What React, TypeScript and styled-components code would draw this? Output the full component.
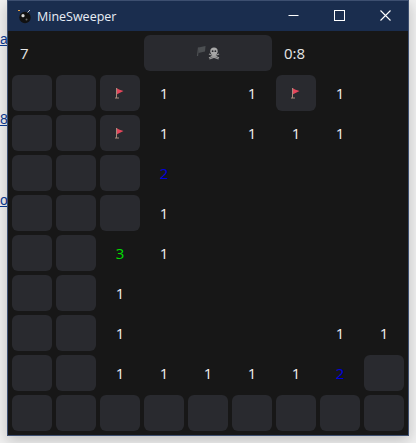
import React from "react";
import styled, { createGlobalStyle } from "styled-components";

const GlobalStyle = createGlobalStyle`
  html, body {
    margin: 0;
    padding: 0;
    background: #f0f0f0;
    overflow: hidden;
  }
  body {
    font-family: "Open Sans", "Noto Sans", sans-serif;
  }
`;

const Desktop = styled.div`
  display: flex;
  width: 416px;
  height: 443px;
  background: #f1f1f1;
  overflow: hidden;
`;

const PageBehind = styled.div`
  display: flex;
  flex-direction: column;
  align-items: flex-start;
  width: 7px;
  padding-top: 31px;
  overflow: hidden;
  flex-shrink: 0;
  font-family: "Liberation Sans", sans-serif;
  font-size: 14px;
  line-height: 16px;
`;

const BehindLink = styled.a<{ $gap: number }>`
  color: #0a3a94;
  text-decoration: underline;
  white-space: nowrap;
  margin-bottom: ${(p) => p.$gap}px;
`;

const Window = styled.div`
  width: 402px;
  height: 436px;
  flex-shrink: 0;
  display: flex;
  flex-direction: column;
  border: solid 1px #3d4f70;
  box-sizing: border-box;
  background: #171717;
  box-shadow: 0 4px 14px rgba(0, 0, 0, 0.22);
`;

const TitleBar = styled.div`
  display: flex;
  align-items: center;
  height: 30px;
  flex-shrink: 0;
  background: #1a2d4e;
  padding-left: 10px;
`;

const TitleText = styled.span`
  margin-left: 5px;
  color: #e8eef6;
  font-size: 12.5px;
`;

const WindowButtons = styled.div`
  display: flex;
  align-self: flex-start;
  margin-left: auto;
`;

const WindowButton = styled.div`
  display: flex;
  align-items: center;
  justify-content: center;
  width: 46px;
  height: 29px;
`;

const Board = styled.div`
  display: grid;
  grid-template-columns: repeat(9, 40px);
  grid-auto-rows: 36px;
  gap: 4px;
  padding: 4px;
`;

const Counter = styled.div<{ $pad: number }>`
  display: flex;
  align-items: center;
  padding-left: ${(p) => p.$pad}px;
  color: #e6e6e6;
  font-size: 15px;
`;

const ResetButton = styled.div`
  grid-column: 4 / span 3;
  display: flex;
  align-items: center;
  justify-content: center;
  gap: 2px;
  border-radius: 6px;
  background: #292a2f;
`;

const Spacer = styled.div<{ $span: number }>`
  grid-column: span ${(p) => p.$span};
`;

const Covered = styled.div`
  display: flex;
  align-items: center;
  justify-content: center;
  border-radius: 6px;
  background: #292a2f;
`;

const Opened = styled.div<{ $color: string }>`
  display: flex;
  align-items: center;
  justify-content: center;
  color: ${(p) => p.$color};
  font-size: 15px;
`;

const Bomb = () => (
  <svg width="14" height="15" viewBox="0 0 14 15">
    <path d="M9 4 L11 2" stroke="#cfcfcf" strokeWidth="1" />
    <rect x="0" y="1" width="2" height="1" fill="#e8a040" />
    <rect x="11" y="1" width="1" height="1" fill="#d0d0d0" />
    <circle cx="7" cy="8.5" r="5.7" fill="#111" />
    <circle cx="5" cy="6.7" r="1.6" fill="#d8d8d8" />
    <circle cx="8.5" cy="10.5" r="1" fill="#666" />
  </svg>
);

const Flag = () => (
  <svg width="10" height="11" viewBox="0 0 10 11">
    <path d="M1.5 0 L4 1.5 L8.5 3 L1.5 6.5 Z" fill="#e5475c" />
    <rect x="1" y="0" width="1" height="10" fill="#a98a7c" />
    <rect x="0" y="9.5" width="4" height="1" fill="#a98a7c" />
  </svg>
);

const GreyFlag = () => (
  <svg width="10" height="14" viewBox="0 0 10 14">
    <path d="M2.5 1.5 L9.5 0 L9 5.5 L2.5 7 Z" fill="#4c4f52" />
    <path d="M2.5 1.5 L1.5 10" stroke="#4c4f52" strokeWidth="1.2" />
  </svg>
);

const Skull = () => (
  <svg width="12" height="13" viewBox="0 0 13 13">
    <path d="M3 9.5 L11.5 12.5 M10 9.5 L1.5 12.5 M1 7 L12 11 M12 7 L1 11" stroke="#9a9a9a" strokeWidth="1.2" />
    <circle cx="6.5" cy="4" r="4" fill="#a8a8a8" />
    <rect x="4.5" y="6.5" width="4" height="2.5" fill="#a8a8a8" />
    <circle cx="5" cy="4" r="1" fill="#292a2f" />
    <circle cx="8" cy="4" r="1" fill="#292a2f" />
  </svg>
);

type Cell = "#" | "F" | "." | "1" | "2" | "3";

const rows: string[] = [
  "##F1.1F1.",
  "##F1.111.",
  "###2.....",
  "###1.....",
  "##31.....",
  "##1......",
  "##1....11",
  "##111112#",
  "#########",
];

const numberColors: Record<string, string> = {
  "1": "#f2f2f2",
  "2": "#0000e0",
  "3": "#00e000",
};

const renderCell = (cell: Cell, key: string) => {
  if (cell === "#") return <Covered key={key} />;
  if (cell === "F")
    return (
      <Covered key={key}>
        <Flag />
      </Covered>
    );
  if (cell === ".") return <Opened key={key} $color="transparent" />;
  return (
    <Opened key={key} $color={numberColors[cell]}>
      {cell}
    </Opened>
  );
};

const App = () => {
  return (
    <Desktop>
      <GlobalStyle />
      <PageBehind>
        <BehindLink $gap={64}>ac</BehindLink>
        <BehindLink $gap={65}>85</BehindLink>
        <BehindLink $gap={0}>ol</BehindLink>
      </PageBehind>
      <Window>
        <TitleBar>
          <Bomb />
          <TitleText>MineSweeper</TitleText>
          <WindowButtons>
            <WindowButton>
              <svg width="11" height="11" viewBox="0 0 11 11">
                <path d="M0.5 5.5 H10.5" stroke="#fff" strokeWidth="1" />
              </svg>
            </WindowButton>
            <WindowButton>
              <svg width="11" height="11" viewBox="0 0 11 11">
                <rect x="0.5" y="0.5" width="10" height="10" fill="none" stroke="#fff" strokeWidth="1" />
              </svg>
            </WindowButton>
            <WindowButton>
              <svg width="11" height="11" viewBox="0 0 11 11">
                <path d="M0.5 0.5 L10.5 10.5 M10.5 0.5 L0.5 10.5" stroke="#fff" strokeWidth="1.1" />
              </svg>
            </WindowButton>
          </WindowButtons>
        </TitleBar>
        <Board>
          <Counter $pad={8}>7</Counter>
          <Spacer $span={2} />
          <ResetButton>
            <GreyFlag />
            <Skull />
          </ResetButton>
          <Counter $pad={8}>0:8</Counter>
          <Spacer $span={2} />
          {rows.map((row, y) =>
            row.split("").map((cell, x) => renderCell(cell as Cell, `${x}-${y}`))
          )}
        </Board>
      </Window>
    </Desktop>
  );
};

export default App;
